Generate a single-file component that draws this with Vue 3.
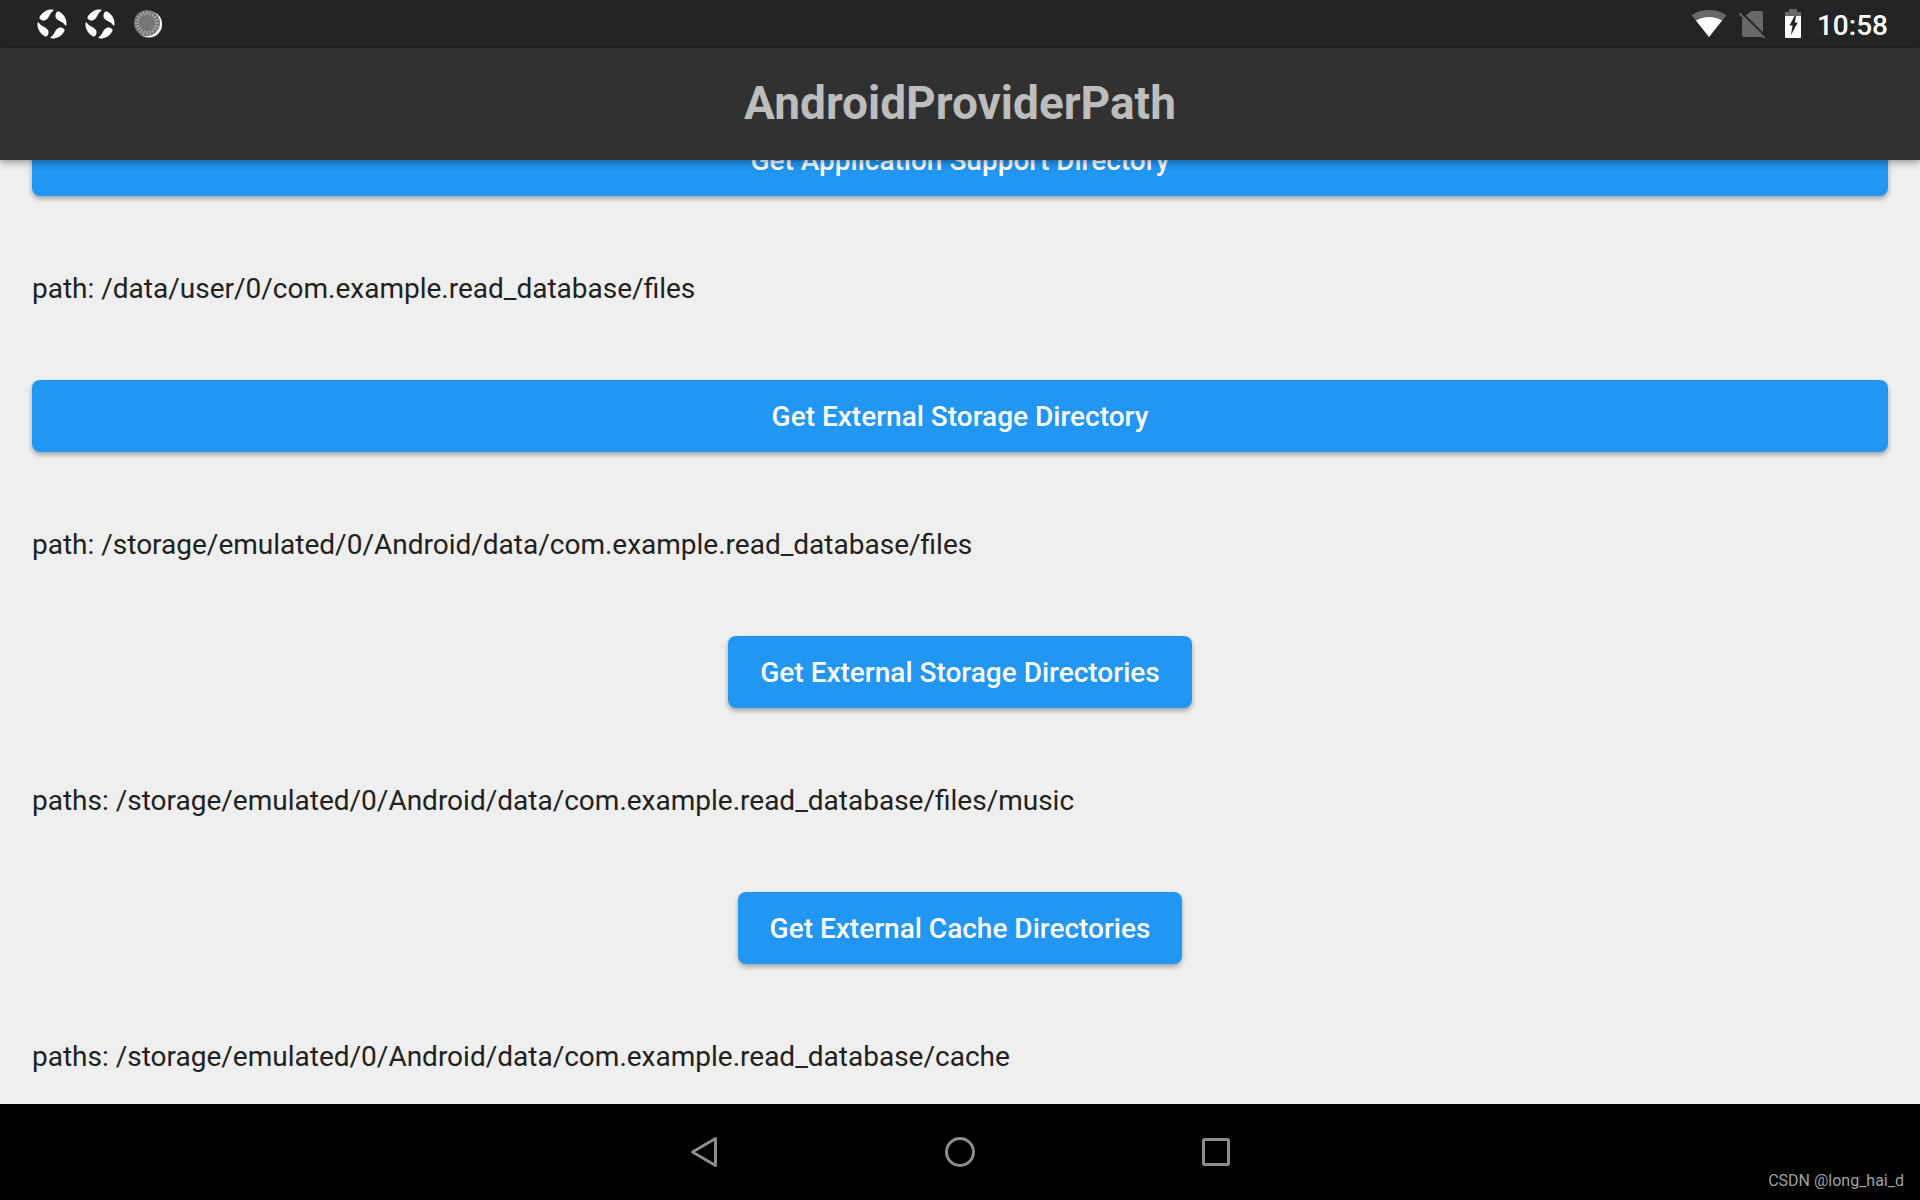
<script setup>
const entries = [
  { label: 'Get Application Support Directory', wide: true, path: 'path: /data/user/0/com.example.read_database/files' },
  { label: 'Get External Storage Directory', wide: true, path: 'path: /storage/emulated/0/Android/data/com.example.read_database/files' },
  { label: 'Get External Storage Directories', wide: false, path: 'paths: /storage/emulated/0/Android/data/com.example.read_database/files/music' },
  { label: 'Get External Cache Directories', wide: false, path: 'paths: /storage/emulated/0/Android/data/com.example.read_database/cache' },
]
const quarterTurns = [0, 90, 180, 270]
const ticks = Array.from({ length: 20 }, (_, i) => i * 18)
</script>

<template>
  <div class="screen">
    <div class="status-bar">
      <div class="notifications">
        <svg v-for="n in 2" :key="n" class="icon" viewBox="0 0 32 32" aria-hidden="true">
          <path
            v-for="angle in quarterTurns"
            :key="angle"
            :transform="`rotate(${angle} 16 16)`"
            fill="#fff"
            d="M23.4 3.8C27.8 6.3 30.5 10.8 30.5 15.4C30.5 17.8 29.8 18.4 28.8 16.8C27.4 14.8 25.8 14.2 23.2 12.8C20 11 18.8 8.6 19.7 5.9C20.4 3.6 21.8 2.9 23.4 3.8Z"
          />
        </svg>
        <svg class="icon" viewBox="0 0 32 32" aria-hidden="true">
          <circle cx="17" cy="17" r="13" fill="#8a8a8a" />
          <circle cx="17" cy="16" r="13" fill="#fff" />
          <circle cx="15" cy="15" r="13" fill="#757575" />
          <path
            v-for="angle in ticks"
            :key="angle"
            :transform="`rotate(${angle} 15 15)`"
            stroke="#bdbdbd"
            d="M15 3V7"
          />
        </svg>
      </div>
      <div class="system">
        <svg class="wifi" viewBox="0 0 36 32" aria-hidden="true">
          <path fill="#686868" d="M18 29L0.5 7.2Q8 2 18 2T35.5 7.2Z" />
          <path fill="#fff" d="M18 29L5 12.5Q11 9 18 9T31 12.5Z" />
        </svg>
        <svg class="sim" viewBox="0 0 28 32" aria-hidden="true">
          <path fill="#686868" d="M12 3H22Q24 3 24 5V27Q24 29 22 29H5Q3 29 3 27V11Z" />
          <path stroke="#242424" stroke-width="2" d="M1 3L27 29" />
          <path stroke="#686868" stroke-width="2" d="M0.5 5.5L25.5 30" />
        </svg>
        <svg class="battery" viewBox="0 0 16 32" aria-hidden="true">
          <path fill="#686868" d="M4 1H12V4H16V8H0V4H4Z" />
          <path fill="#fff" d="M0 8H16V29Q16 30 15 30H1Q0 30 0 29Z" />
          <path fill="#242424" d="M11 8L9.8 14.5H12.8L6 27L7.5 17.5H4.5L9.5 8Z" />
        </svg>
        <time class="clock">10:58</time>
      </div>
    </div>

    <header class="app-bar">
      <h1 class="title">AndroidProviderPath</h1>
    </header>

    <main class="list">
      <template v-for="entry in entries" :key="entry.label">
        <button type="button" class="action" :class="{ wide: entry.wide }">{{ entry.label }}</button>
        <p class="path">{{ entry.path }}</p>
      </template>
    </main>

    <nav class="nav-bar">
      <button type="button" class="nav-button" aria-label="Back">
        <svg class="icon" viewBox="0 0 32 32"><path d="M27.5 2.5V29.5L4.5 16Z" /></svg>
      </button>
      <button type="button" class="nav-button" aria-label="Home">
        <svg class="icon" viewBox="0 0 32 32"><circle cx="16" cy="16" r="13.5" /></svg>
      </button>
      <button type="button" class="nav-button" aria-label="Recent apps">
        <svg class="icon" viewBox="0 0 32 32"><rect x="3.5" y="3.5" width="25" height="25" rx="1" /></svg>
      </button>
      <span class="credit">CSDN @long_hai_d</span>
    </nav>
  </div>
</template>

<style>
body {
  margin: 0;
}
</style>

<style scoped>
.screen {
  display: flex;
  flex-direction: column;
  height: 100vh;
  background: #efefef;
  color: #212121;
  font-family: Roboto, sans-serif;
  overflow: hidden;
}

.status-bar {
  display: flex;
  flex: none;
  align-items: center;
  justify-content: space-between;
  height: 48px;
  padding: 0 32px 0 36px;
  background: #242424;
}

.notifications {
  display: flex;
  gap: 16px;
}

.icon {
  display: block;
  width: 32px;
  height: 32px;
}

.system {
  display: flex;
  align-items: center;
}

.wifi {
  width: 36px;
  height: 32px;
  margin-right: 12px;
}

.sim {
  width: 28px;
  height: 32px;
  margin-right: 18px;
}

.battery {
  width: 16px;
  height: 32px;
  margin-right: 16px;
}

.clock {
  padding-top: 4px;
  color: #fff;
  font-size: 28px;
  font-weight: 500;
  line-height: 40px;
}

.app-bar {
  position: relative;
  z-index: 1;
  display: flex;
  flex: none;
  align-items: center;
  justify-content: center;
  height: 112px;
  background: #313131;
  box-shadow: 0 2px 8px rgba(0, 0, 0, 0.4);
}

.title {
  margin: 0;
  padding-bottom: 2px;
  color: #bdbdbd;
  font-size: 46px;
  font-weight: 700;
  line-height: 56px;
}

.list {
  display: flex;
  flex: 1;
  flex-direction: column;
  align-items: center;
  justify-content: flex-end;
  gap: 72px;
  min-height: 0;
  padding: 0 32px 28px;
}

.action {
  flex: none;
  height: 72px;
  padding: 0 32px;
  border: 0;
  border-radius: 8px;
  background: #2196f3;
  box-shadow: 0 3px 5px rgba(0, 0, 0, 0.3);
  color: #fff;
  font-family: inherit;
  font-size: 28px;
  font-weight: 500;
}

.wide {
  width: 100%;
}

.path {
  flex: none;
  width: 100%;
  margin: 0;
  padding-top: 2px;
  font-size: 28px;
  line-height: 38px;
}

.nav-bar {
  position: relative;
  z-index: 1;
  display: flex;
  flex: none;
  align-items: center;
  justify-content: center;
  gap: 192px;
  height: 96px;
  background: #000;
}

.nav-button {
  padding: 16px;
  border: 0;
  background: none;
}

.nav-button .icon {
  fill: none;
  stroke: #8c8c8c;
  stroke-width: 3;
  stroke-linejoin: round;
}

.credit {
  position: absolute;
  right: 16px;
  bottom: 7px;
  color: #a0a0a0;
  font-size: 16px;
  line-height: 24px;
}
</style>
